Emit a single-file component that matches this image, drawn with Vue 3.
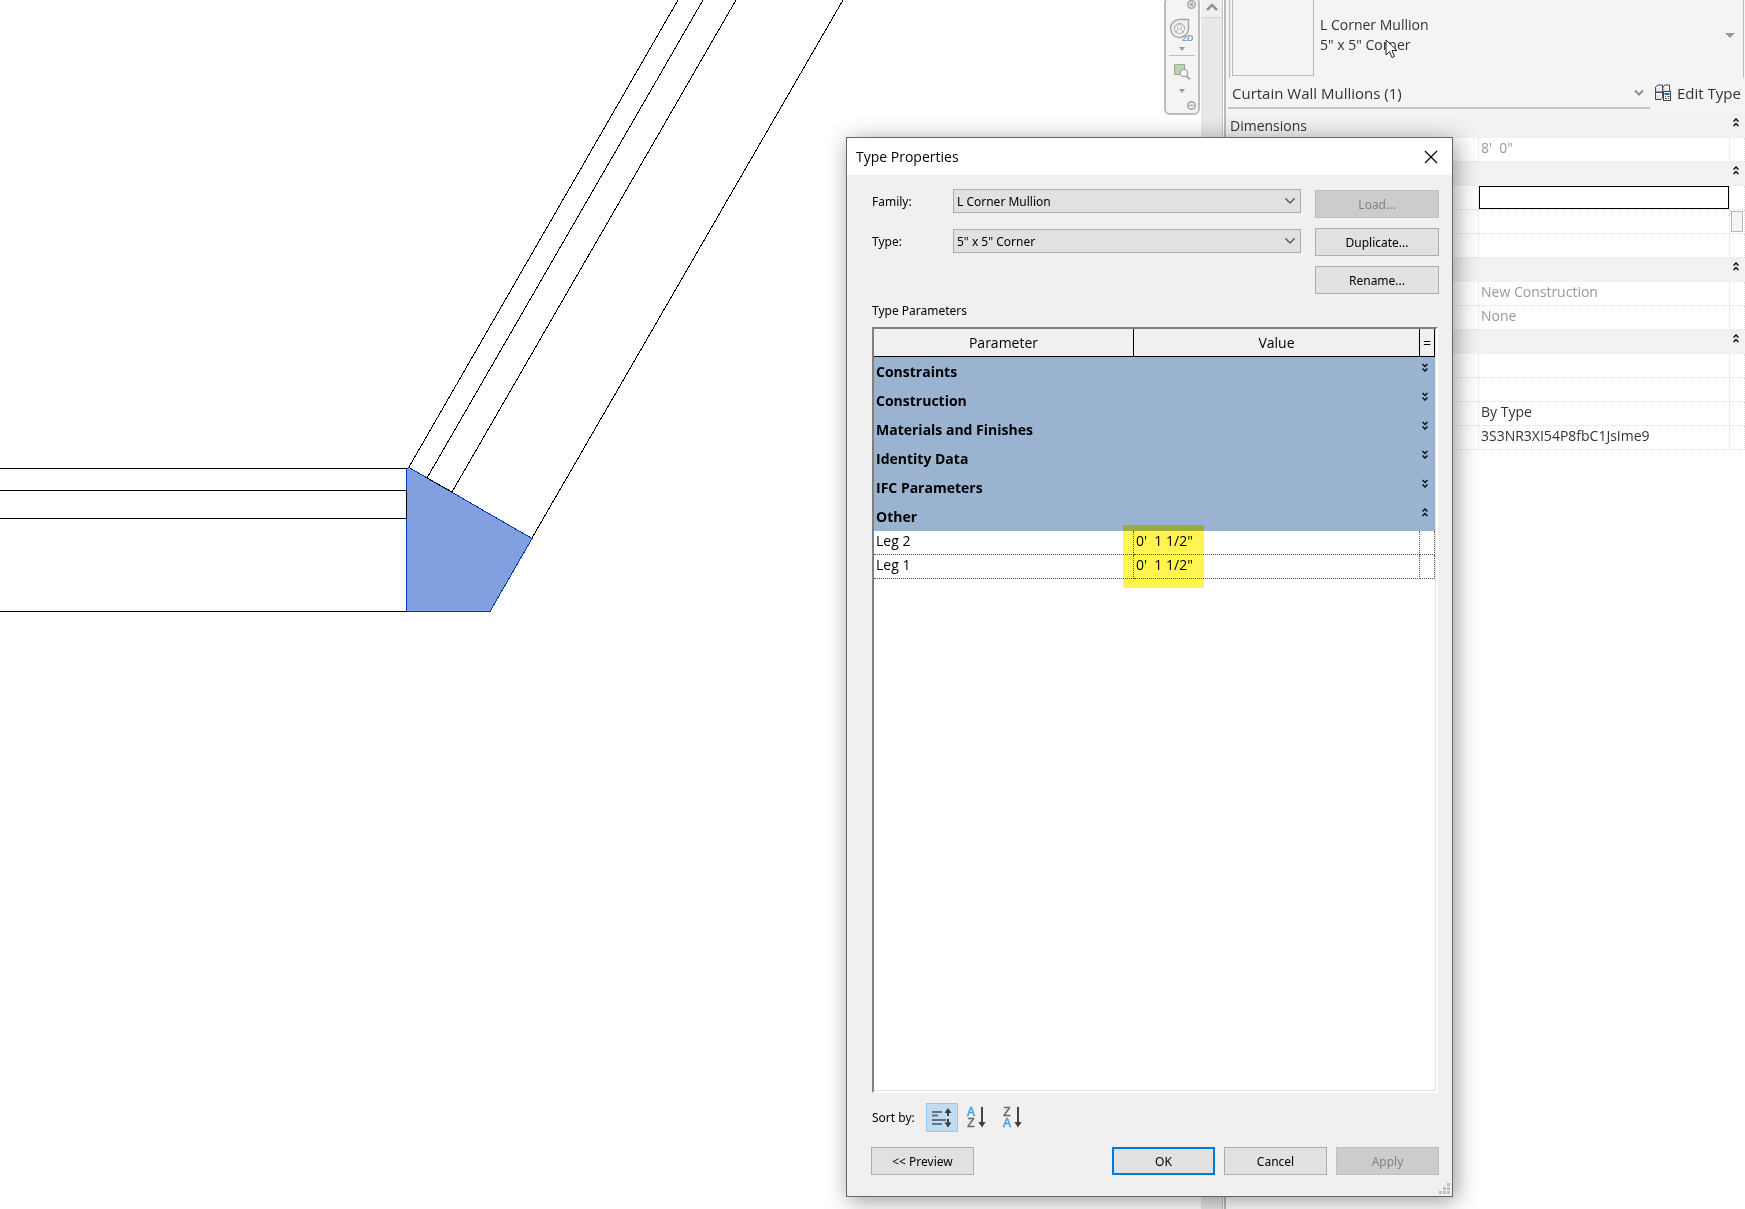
<template>
  <div class="workspace">
    <main class="canvas">
      <svg class="drawing" width="900" height="700" viewBox="0 0 900 700" aria-label="Mullion plan view">
        <g class="edge" shape-rendering="crispEdges">
          <path d="M0 468.5H406M0 490.5H406M0 518.5H406M0 611.5H406" />
          <path d="M409 467L678 0M427 478L703 0M452 492L736 0M532 538L843 0" />
        </g>
        <g shape-rendering="crispEdges">
          <path class="mullion" d="M406.5 468.5L409 467.5L532 538.5L490 611.5H406.5Z" />
          <path class="edge" d="M427 478L452 492M406.5 490V519" />
        </g>
      </svg>
      <nav class="navbar" aria-label="Navigation bar">
        <button class="nav-btn nav-round" aria-label="Close">
          <svg width="9" height="9" viewBox="0 0 9 9"><circle cx="4.5" cy="4.5" r="3.7" /><path d="M3 3l3 3M6 3l-3 3" /></svg>
        </button>
        <button class="nav-btn nav-wheel" aria-label="2D steering wheel">
          <svg width="26" height="25" viewBox="0 0 26 25">
            <path d="M10.500 1.500H19.500V11A9 9 0 1 1 10.500 1.500Z" fill="#eceef1" stroke="#a4a6a8" stroke-width="1.400" />
            <circle cx="10.500" cy="10.500" r="5" fill="#f6f6f6" stroke="#a4a6a8" />
            <circle cx="10.500" cy="9" r="2.200" fill="#fff" stroke="#b0b2b4" />
            <path d="M6.500 14.500L9 11.500M14.500 14.500L12 11.500" stroke="#a4a6a8" />
            <text x="13" y="23">2D</text>
          </svg>
        </button>
        <span class="caret"></span>
        <hr />
        <button class="nav-btn nav-zoom" aria-label="Zoom region">
          <svg width="18" height="18" viewBox="0 0 18 18">
            <rect x="1.500" y="1.500" width="10" height="10" fill="#bdd2ac" stroke="#94b385" />
            <circle cx="11" cy="10" r="3.700" fill="#f5f8fa" stroke="#a4a6a8" stroke-width="1.300" />
            <path d="M13.500 13L17 16.500" stroke="#a4a6a8" stroke-width="2" />
          </svg>
        </button>
        <span class="caret"></span>
        <button class="nav-btn nav-round last" aria-label="Customize">
          <svg width="9" height="9" viewBox="0 0 9 9"><circle cx="4.5" cy="4.5" r="3.7" /><path d="M2.500 4.500h4" /></svg>
        </button>
      </nav>
    </main>

    <div class="scrollbar">
      <button aria-label="Scroll up">
        <svg width="12" height="8" viewBox="0 0 12 8"><path d="M1 7L6 2L11 7" fill="none" stroke="#949494" stroke-width="2.500" /></svg>
      </button>
    </div>

    <aside class="panel">
      <div class="selector">
        <div class="thumb"></div>
        <div class="selector-text">
          <div>L Corner Mullion</div>
          <div>5" x 5" Corner</div>
        </div>
        <button class="selector-open" aria-label="Choose type"></button>
        <svg class="pointer" width="14" height="20" viewBox="0 0 14 20">
          <path d="M1 1V16L4.500 12.500L7 18.500L9.500 17.500L7 11.500H12Z" fill="#fff" stroke="#222" />
        </svg>
      </div>

      <div class="filter">
        <div class="filter-pick">
          <select v-model="category" aria-label="Category">
            <option>Curtain Wall Mullions (1)</option>
          </select>
          <svg width="10" height="8" viewBox="0 0 10 8"><path d="M1 1.500L5 5.500L9 1.500" fill="none" stroke="#8d8d8d" stroke-width="2" /></svg>
        </div>
        <button class="edit-type">
          <svg width="17" height="17" viewBox="0 0 17 17">
            <path d="M3 1H7.500V8H.5V3ZM10 1H14.500V8H8V3ZM.5 8.500H7.500V13.500L6 15.500H.5Z" fill="#fff" stroke="#3c4654" />
            <path d="M1 3.500H5.500V7H1ZM8.500 3.500H12.500V7H8.500ZM1 10.500H5.500V15H1Z" fill="#dfe3e8" />
            <rect x="8.500" y="7.500" width="7" height="9" fill="#fff" stroke="#3c4654" />
            <path d="M9.500 10H14.500" stroke="#2b66b8" stroke-width="2" />
            <path d="M10 12.500h1M12.500 12.500h2M10 14.500h2M13 14.500h1" stroke="#3c4654" />
          </svg>
          <span>Edit Type</span>
        </button>
      </div>

      <table class="props">
        <colgroup><col><col class="c-val"><col class="c-end"></colgroup>
        <tbody>
          <template v-for="(section, s) in sections" :key="s">
            <tr class="section">
              <th colspan="2">{{ section.title }}</th>
              <th><button class="fold" aria-label="Collapse"><svg width="6" height="9" viewBox="0 0 6 9"><path d="M.5 3.500L3 1L5.500 3.500M.5 8L3 5.500L5.500 8" /></svg></button></th>
            </tr>
            <tr v-for="(row, r) in section.rows" :key="r">
              <td></td>
              <td :class="{ muted: row.muted, editing: row.editing }">
                <input v-if="row.editing" v-model="row.value" type="text" aria-label="Value">
                <template v-else>{{ row.value }}</template>
              </td>
              <td class="end"><button v-if="row.more" class="more" aria-label="Associate parameter"></button></td>
            </tr>
          </template>
        </tbody>
      </table>
    </aside>

    <div class="dialog" role="dialog" aria-labelledby="dlg-title">
      <header class="titlebar">
        <h1 id="dlg-title">Type Properties</h1>
        <button class="close" aria-label="Close">
          <svg width="14" height="14" viewBox="0 0 14 14"><path d="M1 1L13 13M13 1L1 13" stroke="#000" stroke-width="1.200" /></svg>
        </button>
      </header>

      <div class="body">
        <div class="top">
          <div class="fields">
            <div class="field">
              <label for="family">Family:</label>
              <div class="combo">
                <select id="family" v-model="family"><option>L Corner Mullion</option></select>
                <svg width="10" height="6" viewBox="0 0 10 6"><path d="M.5 .5L5 5L9.500 .5" /></svg>
              </div>
            </div>
            <div class="field">
              <label for="type">Type:</label>
              <div class="combo">
                <select id="type" v-model="type"><option>5" x 5" Corner</option></select>
                <svg width="10" height="6" viewBox="0 0 10 6"><path d="M.5 .5L5 5L9.500 .5" /></svg>
              </div>
            </div>
          </div>
          <div class="side">
            <button class="btn" disabled>Load...</button>
            <button class="btn">Duplicate...</button>
            <button class="btn">Rename...</button>
          </div>
        </div>

        <div class="caption">Type Parameters</div>
        <div class="grid-box">
          <table class="params">
            <colgroup><col class="p-name"><col><col class="p-end"></colgroup>
            <thead>
              <tr><th>Parameter</th><th>Value</th><th class="eq">=</th></tr>
            </thead>
            <tbody>
              <template v-for="group in groups" :key="group.name">
                <tr class="group">
                  <th colspan="3">
                    <div class="group-line">
                      <span>{{ group.name }}</span>
                      <button class="fold" :aria-label="'Toggle ' + group.name" @click="group.open = !group.open">
                        <svg width="6" height="9" viewBox="0 0 6 9">
                          <path v-if="group.open" d="M.5 3.500L3 1L5.500 3.500M.5 8L3 5.500L5.500 8" />
                          <path v-else d="M.5 1L3 3.500L5.500 1M.5 5.500L3 8L5.500 5.500" />
                        </svg>
                      </button>
                    </div>
                  </th>
                </tr>
                <template v-if="group.open">
                  <tr v-for="(row, i) in group.rows" :key="row.name" class="param">
                    <td>{{ row.name }}</td>
                    <td class="value">{{ row.value }}<span v-if="i === 0" class="marker"></span></td>
                    <td></td>
                  </tr>
                </template>
              </template>
            </tbody>
          </table>
        </div>

        <div class="sort">
          <span class="sort-label">Sort by:</span>
          <button class="sort-btn active" aria-label="Default order">
            <svg width="20" height="21" viewBox="0 0 20 21">
              <path d="M0 5H10M0 8.500H6M0 13H14M0 17H10" stroke="#67727d" stroke-width="2" />
              <path d="M16 4V9M16 12V17" stroke="#3d3d3d" stroke-width="2" />
              <path d="M12.500 6L16 1L19.500 6ZM12.500 15.500L16 20.500L19.500 15.500Z" fill="#3d3d3d" />
            </svg>
          </button>
          <button v-for="order in ['AZ', 'ZA']" :key="order" class="sort-btn" :aria-label="'Sort ' + order">
            <svg width="24" height="26" viewBox="0 0 24 26">
              <text v-for="(ch, i) in order" :key="ch" x="5" :y="i ? 22 : 11" :class="'letter-' + ch">{{ ch }}</text>
              <path d="M16 2V18" stroke="#444" stroke-width="2" />
              <path d="M12.500 17H19.500L16 22.500Z" fill="#3d3d3d" />
            </svg>
          </button>
        </div>

        <footer class="actions">
          <button class="btn preview">&lt;&lt; Preview</button>
          <button class="btn primary">OK</button>
          <button class="btn">Cancel</button>
          <button class="btn" disabled>Apply</button>
        </footer>
      </div>
      <svg class="grip" width="11" height="11" viewBox="0 0 11 11">
        <path d="M8 0h3v3h-3zM4 4h3v3h-3zM8 4h3v3h-3zM0 8h3v3h-3zM4 8h3v3h-3zM8 8h3v3h-3z" fill="#bfbfbf" />
      </svg>
    </div>
  </div>
</template>

<script setup>
import { reactive, ref } from 'vue'

const category = ref('Curtain Wall Mullions (1)')
const family = ref('L Corner Mullion')
const type = ref('5" x 5" Corner')

const sections = reactive([
  { title: 'Dimensions', rows: [{ value: "8'  0\"", muted: true }] },
  { title: '', rows: [{ value: '', editing: true }, { value: '', more: true }, { value: '' }] },
  { title: '', rows: [{ value: 'New Construction', muted: true }, { value: 'None', muted: true }] },
  { title: '', rows: [{ value: '' }, { value: '' }, { value: 'By Type' }, { value: '3S3NR3XI54P8fbC1JsIme9' }] },
])

const groups = reactive([
  { name: 'Constraints', open: false, rows: [] },
  { name: 'Construction', open: false, rows: [] },
  { name: 'Materials and Finishes', open: false, rows: [] },
  { name: 'Identity Data', open: false, rows: [] },
  { name: 'IFC Parameters', open: false, rows: [] },
  {
    name: 'Other',
    open: true,
    rows: [
      { name: 'Leg 2', value: "0'  1 1/2\"" },
      { name: 'Leg 1', value: "0'  1 1/2\"" },
    ],
  },
])
</script>

<style>
body { margin: 0; background: #fff; }
</style>

<style scoped>
.workspace {
  position: relative;
  display: grid;
  grid-template-columns: minmax(0, 1fr) 22px 522px;
  column-gap: 0;
  height: 100vh;
  overflow: hidden;
  background: #fff;
  color: #333;
  font-family: "Open Sans", "Noto Sans", sans-serif;
  font-size: 14px;
}
.workspace * { box-sizing: border-box; }
button, select, input { font: inherit; color: inherit; margin: 0; padding: 0; }
button { border: 0; background: none; }
select { appearance: none; border: 0; background: none; border-radius: 0; width: 100%; outline: none; }
svg { display: block; flex: none; }

/* Drawing area */
.canvas { position: relative; overflow: hidden; }
.edge { fill: none; stroke: #000; }
.mullion { fill: #829fdf; stroke: #0038b8; }

.navbar {
  position: absolute;
  top: -3px;
  right: 1px;
  width: 36px;
  height: 118px;
  display: flex;
  flex-direction: column;
  align-items: center;
  border: 2px solid #bdbdbd;
  border-radius: 6px;
  background: #f4f4f4;
}
.nav-btn { display: flex; }
.nav-round { align-self: flex-end; margin: 1px 2px 0; }
.nav-round svg { fill: none; stroke: #a3a3a3; stroke-width: 1.5; }
.nav-round.last { margin-top: 8px; }
.nav-wheel { margin-top: 9px; }
.nav-wheel text { font: bold 9px "Liberation Sans", sans-serif; fill: #7d9fc4; }
.caret { border: 3px solid transparent; border-top: 4px solid #999; border-bottom: 0; margin-top: 4px; }
.navbar hr { width: 26px; height: 1px; border: 0; margin: 4px 0 7px; background: #bdbdbd; }
.nav-zoom + .caret { margin-top: 8px; }

.scrollbar { background: #e8e8e8; border-right: 1px solid #c4c4c4; }
.scrollbar button { width: 100%; height: 18px; display: flex; align-items: center; justify-content: center; padding-bottom: 3px; background: #f0f0f0; border-bottom: 1px solid #d4d4d4; }

/* Properties panel */
.panel { border-left: 2px solid #bbb; margin-left: 1px; display: flex; flex-direction: column; min-width: 0; background: linear-gradient(#f4f4f4 114px, #fff 114px); }
.selector {
  position: relative;
  display: flex;
  height: 78px;
  margin: 0 1px 0 3px;
  padding-left: 2px;
  border: solid #bbb;
  border-width: 0 1px;
}
.thumb { width: 82px; height: 76px; border: 1px solid #b8b8b8; border-top: 0; }
.selector-text { flex: 1; padding: 15px 0 0 6px; line-height: 20px; }
.selector-open { width: 10px; height: 5px; margin: 33px 8px 0; background: #999; clip-path: polygon(0 0, 100% 0, 50% 100%); }
.pointer { position: absolute; left: 155px; top: 39px; }

.filter { display: flex; height: 36px; padding-left: 2px; font-size: 15px; }
.filter-pick { flex: 1; display: flex; align-items: center; height: 31px; padding: 0 6px 0 4px; border-bottom: 2px solid #c8c8c8; }
.edit-type { display: flex; align-items: center; gap: 5px; height: 29px; width: 95px; padding-left: 5px; white-space: nowrap; }

.props { width: 100%; table-layout: fixed; border-collapse: separate; border-spacing: 0; background: #fff; }
.c-val { width: 251px; }
.c-end { width: 15px; }
.props td, .props th { height: 24px; padding: 0; line-height: 20px; white-space: pre; }
.props td { vertical-align: top; }
.props th { background: #f2f2f2; font-weight: normal; text-align: left; padding-left: 4px; }
.props td { border-right: 1px dotted #ddd; border-bottom: 1px dotted #ddd; }
.props td + td { padding-left: 2px; }
.props .section th + th { padding: 0 0 0 3px; }
.props .fold { height: 16px; }
.props .muted { color: #999; }
.props td.editing { padding: 0; }
.editing input { display: block; width: 100%; height: 23px; border: 1px solid #000; background: #fff; outline: none; padding: 0 3px; }
.props td.end { padding: 0 1px; }
.more { display: block; width: 12px; height: 21px; margin-top: 1px; border: 1px solid #b8b8b8; background: #f4f4f4; }
.fold { display: flex; align-items: flex-start; }
.fold path { fill: none; stroke: #111; stroke-width: 1.5; }

/* Type Properties dialog */
.dialog {
  position: absolute;
  top: 137px;
  right: 292px;
  bottom: 12px;
  width: 607px;
  display: flex;
  flex-direction: column;
  border: 1px solid #666;
  background: #f0f0f0;
  color: #000;
  box-shadow: 3px 4px 22px rgba(0, 0, 0, 0.4);
}
.titlebar { display: flex; align-items: center; justify-content: space-between; height: 37px; padding: 0 14px 0 9px; background: #fff; }
.titlebar h1 { margin: 0; font-size: 14px; font-weight: normal; }
.body { flex: 1; min-height: 0; display: flex; flex-direction: column; padding: 14px 13px 21px 24px; font-family: "Noto Sans", sans-serif; font-size: 12px; }
.top { display: flex; gap: 14px; padding-left: 1px; }
.fields { flex: 1; display: flex; flex-direction: column; gap: 16px; }
.field { display: flex; align-items: center; height: 24px; }
.field label { width: 81px; }
.combo { flex: 1; display: flex; align-items: center; height: 24px; padding: 0 5px 0 3px; border: 1px solid #adadad; background: #e1e1e1; }
.combo path { fill: none; stroke: #444; stroke-width: 1.2; }
.side { width: 124px; display: flex; flex-direction: column; gap: 10px; padding-top: 1px; }
.btn { height: 28px; border: 1px solid #adadad; background: #e1e1e1; text-align: center; }
.btn:disabled { border-color: #bfbfbf; background: #ccc; color: #838383; }
.btn.primary { border: 2px solid #0078d7; }
.caption { margin-top: 8px; padding-left: 1px; line-height: 18px; }

.grid-box {
  flex: 1;
  min-height: 0;
  margin: 7px 1px 0;
  border: 2px solid;
  border-color: #808080 #fff #fff #808080;
  padding-right: 1px;
  background: #fff;
  box-shadow: inset -1px -1px #e3e3e3;
  font-family: "Open Sans", "Noto Sans", sans-serif;
  font-size: 14px;
}
.params { width: 100%; table-layout: fixed; border-collapse: separate; border-spacing: 0; }
.p-name { width: 260px; }
.p-end { width: 15px; }
.params th, .params td { padding: 0; white-space: pre; }
.params thead th { height: 28px; border: solid #000; border-width: 0 1px 1px 0; background: #f0f0f0; font-weight: normal; line-height: 20px; }
.params tbody th { height: 29px; background: #9ab3d1; text-align: left; }
.group-line { display: flex; align-items: center; justify-content: space-between; height: 29px; padding: 0 7px 0 2px; }
.group-line .fold { height: 18px; }
.params td { height: 24px; padding-left: 2px; line-height: 20px; vertical-align: top; border: dotted #555; border-width: 0 1px 1px 0; }
.value { position: relative; }
/* highlighter stroke over both leg values */
.marker { position: absolute; z-index: 1; left: -11px; top: -6px; width: 81px; height: 63px; background: #fff450; mix-blend-mode: multiply; }

.sort { display: flex; align-items: center; gap: 4px; height: 29px; margin-top: 10px; padding-left: 1px; }
.sort-label { width: 50px; }
.sort-btn { width: 32px; height: 29px; display: flex; align-items: center; justify-content: center; border: 1px solid transparent; }
.sort-btn.active { border-color: #90c8f6; background: #c0dcf3; }
.sort-btn svg { overflow: visible; }
.sort-btn text { font: 12px "Liberation Sans", sans-serif; stroke-width: 0.5; text-anchor: middle; }
.letter-A { fill: #3d9fe3; stroke: #3d9fe3; }
.letter-Z { fill: #6b6b6b; stroke: #6b6b6b; }

.actions { display: flex; gap: 9px; margin-top: 15px; }
.actions .btn { width: 103px; }
.actions .preview { margin-right: auto; }
.grip { position: absolute; right: 2px; bottom: 2px; }
</style>
